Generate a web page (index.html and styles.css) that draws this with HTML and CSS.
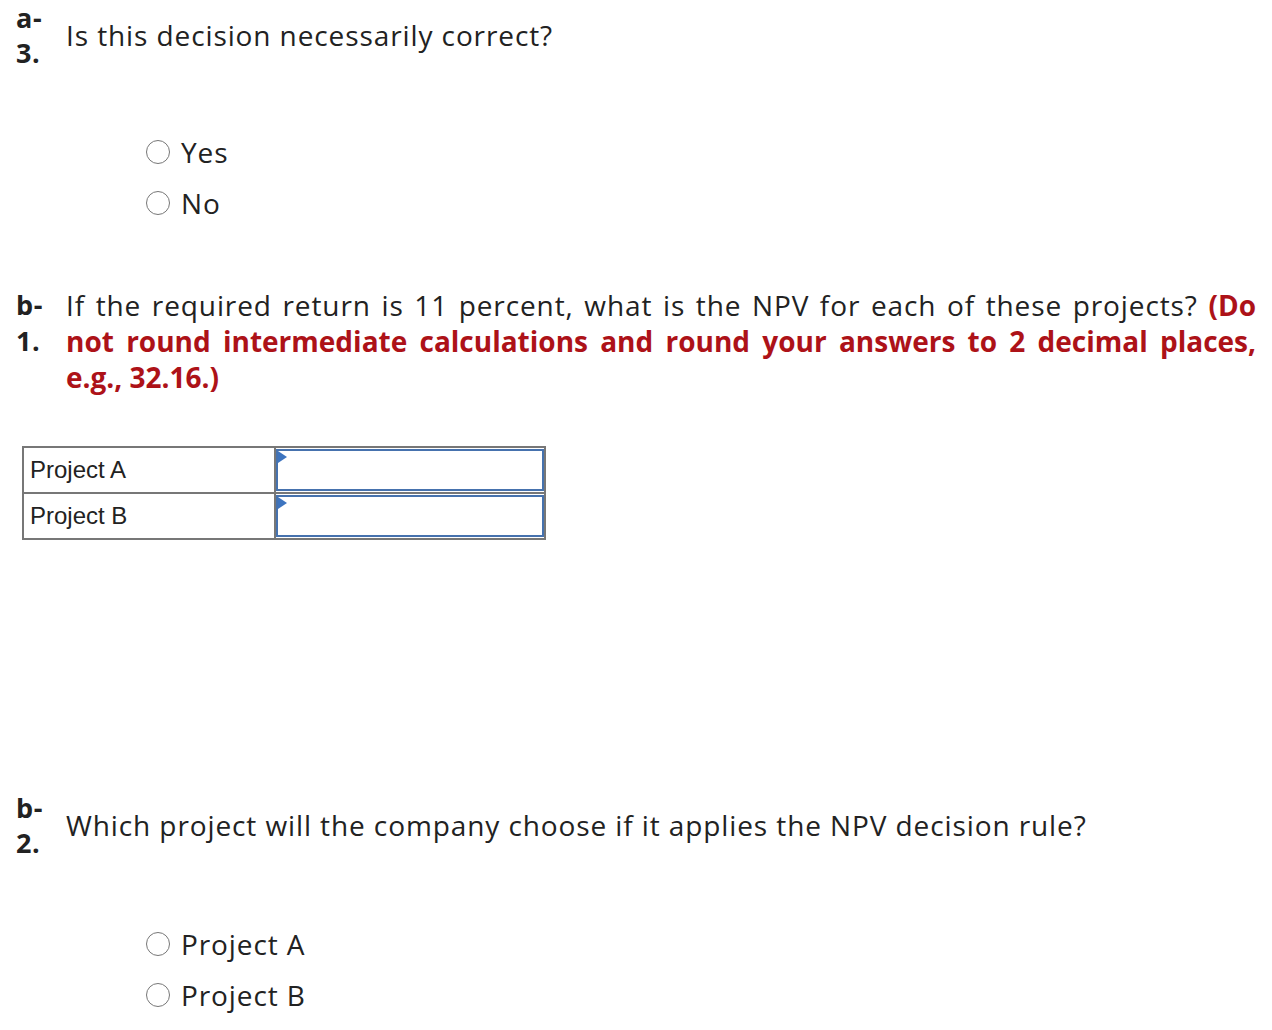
FILE: index.html
```html
<!DOCTYPE html>
<html>
<head>
  <title>NPV questions</title>
  <link rel="stylesheet" href="styles.css">
</head>
<body>
  <div class="part part-a3">
    <div class="part-label">a-<br>3.</div>
    <div class="part-text">Is this decision necessarily correct?</div>
  </div>

  <div class="choices choices-a3">
    <label class="choice"><span class="radio"></span>Yes</label>
    <label class="choice"><span class="radio"></span>No</label>
  </div>

  <div class="part part-b1 top">
    <div class="part-label">b-<br>1.</div>
    <div class="part-text justify">If the required return is 11 percent, what is the NPV for each of these projects? <strong class="hint">(Do not round intermediate calculations and round your answers to 2 decimal places, e.g., 32.16.)</strong></div>
  </div>

  <table class="answer-table">
    <tr>
      <td class="row-label">Project A</td>
      <td class="row-input"><div class="answer-box"></div></td>
    </tr>
    <tr>
      <td class="row-label">Project B</td>
      <td class="row-input"><div class="answer-box"></div></td>
    </tr>
  </table>

  <div class="part part-b2">
    <div class="part-label">b-<br>2.</div>
    <div class="part-text">Which project will the company choose if it applies the NPV decision rule?</div>
  </div>

  <div class="choices choices-b2">
    <label class="choice"><span class="radio"></span>Project A</label>
    <label class="choice"><span class="radio"></span>Project B</label>
  </div>
</body>
</html>
```

FILE: styles.css
```css
body {
  margin: 0;
  padding: 0 16px;
  background: #fff;
  color: #222;
  font-family: "Open Sans", "Lato", sans-serif;
}

.part {
  display: flex;
  align-items: center;
}

.part.top {
  align-items: flex-start;
}

.part-label {
  width: 50px;
  flex: none;
  font-size: 27px;
  font-weight: 700;
  line-height: 35px;
  letter-spacing: 0.6px;
}

.part-text {
  flex: 1;
  font-size: 28px;
  line-height: 36px;
  letter-spacing: 0.9px;
}

.part-b1 .part-label {
  line-height: 36px;
}

.part-text.justify {
  text-align: justify;
}

.hint {
  color: #ad1218;
  font-weight: 700;
  letter-spacing: 0;
}

.part-b1 {
  margin-top: 59px;
}

.part-b2 {
  margin-top: 250px;
}

.choices {
  display: flex;
  flex-direction: column;
  padding-left: 130px;
}

.choices-a3 {
  margin-top: 56px;
}

.choices-b2 {
  margin-top: 58px;
}

.choice {
  display: flex;
  align-items: center;
  gap: 11px;
  height: 51px;
  font-size: 28px;
  letter-spacing: 0.9px;
}

.radio {
  width: 22px;
  height: 22px;
  border: 1.5px solid #777;
  border-radius: 50%;
  background: #fff;
}

.answer-table {
  margin: 51px 0 0 6px;
  border-collapse: collapse;
  font-family: "Liberation Sans", Arial, sans-serif;
  font-size: 24px;
}

.answer-table td {
  border: 2px solid #777;
  height: 44px;
  padding: 0;
}

.row-label {
  width: 244px;
  padding-left: 6px !important;
}

.row-input {
  width: 268px;
}

.answer-box {
  position: relative;
  height: 38px;
  border: 2px solid #4672ae;
  margin: 1px 0;
}

.answer-box::before {
  content: "";
  position: absolute;
  left: 0;
  top: 0;
  border-left: 9px solid #3d74bf;
  border-top: 6px solid transparent;
  border-bottom: 6px solid transparent;
}
```
